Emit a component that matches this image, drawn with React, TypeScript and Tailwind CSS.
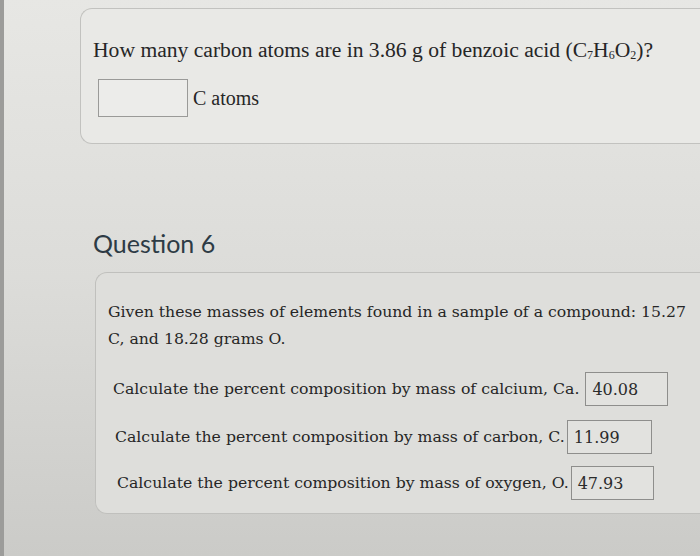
import React from 'react'

const serif = { fontFamily: '"Liberation Serif", "DejaVu Serif", serif' }
const wide = { fontFamily: '"DejaVu Serif", "Liberation Serif", serif' }

function AnswerBox({ value, className }: { value: string; className: string }) {
  return (
    <div
      className={`h-[34px] border border-[#8e8e8c] bg-[#e2e2df] px-1.5 pt-[5px] text-[16px] leading-[24px] text-[#2b2b2b] ${className}`}
    >
      {value}
    </div>
  )
}

export default function App() {
  const rows = [
    { label: 'Calculate the percent composition by mass of calcium, Ca.', value: '40.08', pad: 'pl-[108px]', box: 'w-[83px] ml-1.5', mt: 'mt-[20px]' },
    { label: 'Calculate the percent composition by mass of carbon, C.', value: '11.99', pad: 'pl-[110px]', box: 'w-[85px] ml-0.5', mt: 'mt-[14px]' },
    { label: 'Calculate the percent composition by mass of oxygen, O.', value: '47.93', pad: 'pl-[112px]', box: 'w-[83px] ml-0.5', mt: 'mt-[12px]' },
  ]

  return (
    <div className="h-[556px] w-[700px] overflow-hidden flex bg-linear-to-b from-[#e7e7e4] via-[#dcdcd9] to-[#cbcbc8]">
      <div className="w-[4px] shrink-0 bg-[#9c9c9a]" />
      <div className="flex-1 flex flex-col" style={serif}>
        {/* Question 5 card */}
        <div className="mt-[8px] ml-[76px] h-[136px] rounded-l-[12px] border border-r-0 border-[#c2c2bf] bg-[#e9e9e6] pl-[12px] pt-[26px]">
          <p className="text-[21.6px] leading-[31px] text-[#262626]">
            How many carbon atoms are in 3.86 g of benzoic acid (C
            <sub className="text-[12px] relative top-[2px]">7</sub>H
            <sub className="text-[12px] relative top-[2px]">6</sub>O
            <sub className="text-[12px] relative top-[2px]">2</sub>)?
          </p>
          <div className="mt-[13px] flex items-center">
            <div className="ml-[5px] h-[38px] w-[90px] border border-[#9a9a98] bg-[#ececea]" />
            <span className="ml-[5px] text-[20px] text-[#262626]">C atoms</span>
          </div>
        </div>

        {/* Question 6 header */}
        <h2
          className="mt-[84px] ml-[89px] text-[25px] leading-[30px] text-[#2d3b45]"
          style={{ fontFamily: 'Lato, "Open Sans", sans-serif' }}
        >
          Question 6
        </h2>

        {/* Question 6 card */}
        <div className="mt-[14px] ml-[91px] h-[242px] overflow-hidden rounded-l-[12px] border border-r-0 border-[#c0c0bd] bg-[#dededb]" style={wide}>
          <p className="mt-[25px] ml-[12px] text-[15.7px] leading-[27px] text-[#262626] whitespace-nowrap">
            Given these masses of elements found in a sample of a compound: 15.27
            <br />
            C, and 18.28 grams O.
          </p>
          {rows.map((r) => (
            <div key={r.value} className={`flex items-center -ml-[91px] ${r.pad} ${r.mt}`}>
              <span className="text-[15.7px] text-[#262626] whitespace-nowrap">{r.label}</span>
              <AnswerBox value={r.value} className={r.box} />
            </div>
          ))}
        </div>
      </div>
    </div>
  )
}
